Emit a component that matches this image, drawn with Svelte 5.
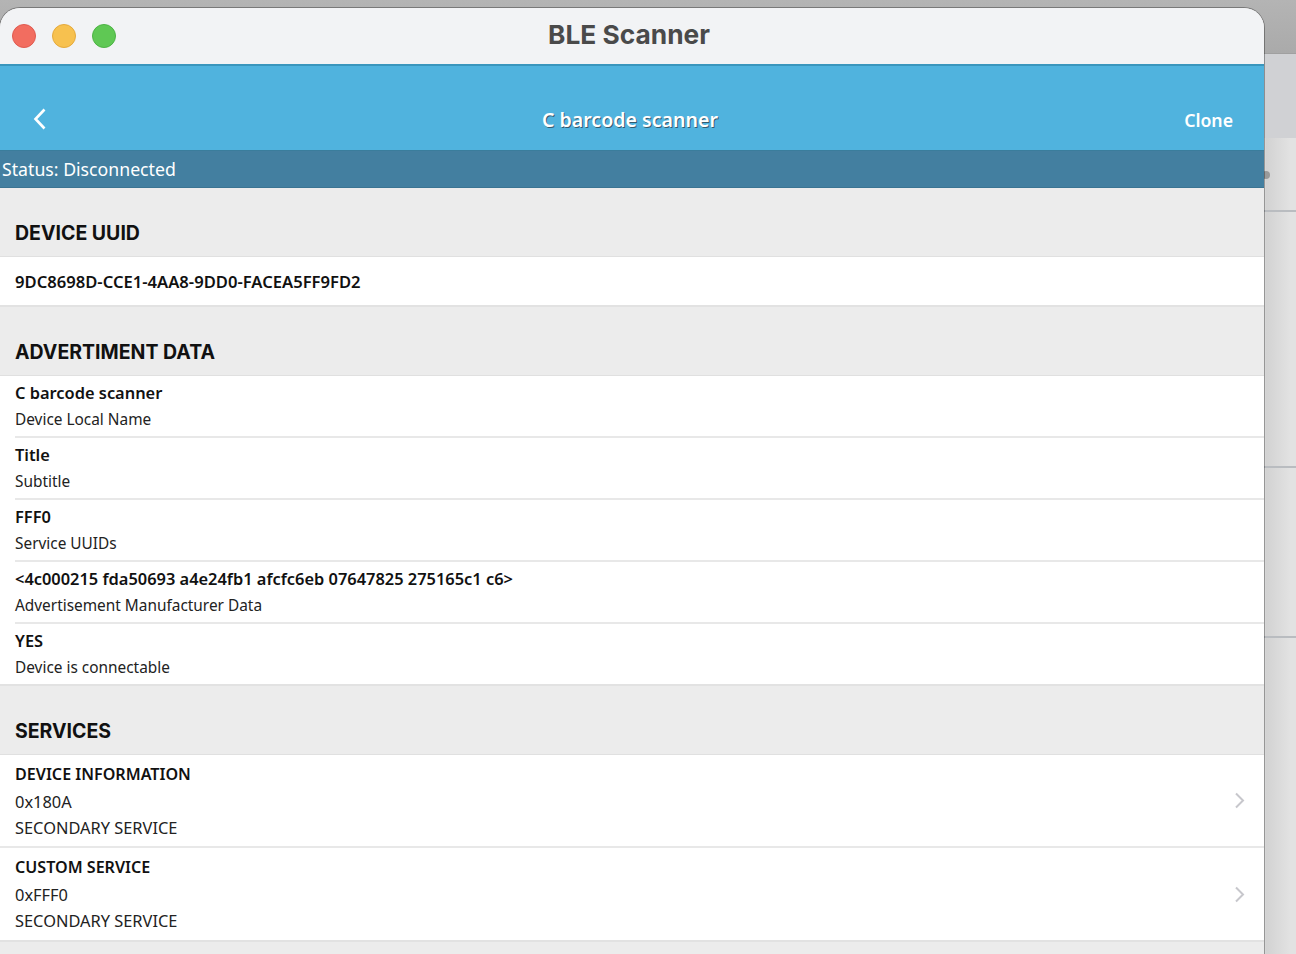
<script>
	const advertisement = [
		{ title: 'C barcode scanner', sub: 'Device Local Name' },
		{ title: 'Title', sub: 'Subtitle' },
		{ title: 'FFF0', sub: 'Service UUIDs' },
		{ title: '<4c000215 fda50693 a4e24fb1 afcfc6eb 07647825 275165c1 c6>', sub: 'Advertisement Manufacturer Data' },
		{ title: 'YES', sub: 'Device is connectable' }
	];

	const services = [
		{ name: 'DEVICE INFORMATION', uuid: '0x180A', kind: 'SECONDARY SERVICE' },
		{ name: 'CUSTOM SERVICE', uuid: '0xFFF0', kind: 'SECONDARY SERVICE' }
	];
</script>

<div class="desktop">
	<div class="backdrop">
		<div class="back-top"></div>
		<div class="back-band"></div>
		<div class="back-panel">
			<span class="back-dot"></span>
			<span class="back-line line-a"></span>
			<span class="back-line line-b"></span>
			<span class="back-line line-c"></span>
		</div>
	</div>

	<main class="window">
		<header class="titlebar">
			<div class="lights">
				<span class="light red"></span>
				<span class="light yellow"></span>
				<span class="light green"></span>
			</div>
			<h1>BLE Scanner</h1>
		</header>

		<nav class="navbar">
			<svg class="back" width="14" height="22" viewBox="0 0 14 22" aria-hidden="true">
				<path d="M11.5 1.5 L2.5 11 L11.5 20.5" fill="none" stroke="#fff" stroke-width="2.6" />
			</svg>
			<div class="nav-title">C barcode scanner</div>
			<div class="clone">Clone</div>
		</nav>

		<div class="status">Status: Disconnected</div>

		<section>
			<h2 class="head">DEVICE UUID</h2>
			<div class="uuid">9DC8698D-CCE1-4AA8-9DD0-FACEA5FF9FD2</div>
		</section>

		<section>
			<h2 class="head">ADVERTIMENT DATA</h2>
			<div class="list">
				{#each advertisement as row}
					<div class="row">
						<div class="row-title">{row.title}</div>
						<div class="row-sub">{row.sub}</div>
					</div>
				{/each}
			</div>
		</section>

		<section>
			<h2 class="head">SERVICES</h2>
			<div class="list">
				{#each services as service}
					<div class="service">
						<div>
							<div class="service-name">{service.name}</div>
							<div class="service-sub">{service.uuid}</div>
							<div class="service-sub">{service.kind}</div>
						</div>
						<svg width="11" height="17" viewBox="0 0 11 17" aria-hidden="true">
							<path d="M2 1.5 L9 8.5 L2 15.5" fill="none" stroke="#c7c7cc" stroke-width="2" />
						</svg>
					</div>
				{/each}
			</div>
		</section>
	</main>
</div>

<style>
	:global(body) {
		margin: 0;
		overflow: hidden;
	}

	.desktop {
		position: relative;
		height: 954px;
		overflow: hidden;
		padding-top: 8px;
		box-sizing: border-box;
		font-family: 'Noto Sans', 'Open Sans', sans-serif;
		color: #111;
	}

	.backdrop {
		position: absolute;
		inset: 0;
		background: #e2e2e2;
	}

	.back-top {
		height: 53px;
		background: linear-gradient(180deg, #b4b4b4, #aaaaaa);
		border-bottom: 1px solid #a0a0a0;
	}

	.back-band {
		height: 84px;
		background: #d0d1d4;
	}

	.back-panel {
		position: relative;
		height: 816px;
		background: linear-gradient(90deg, #e2e2e2 1264px, #d2d2d2 1266px, #e2e2e2 1290px);
	}

	.back-line {
		position: absolute;
		left: 0;
		right: 0;
		height: 2px;
		background: #b9bcc0;
	}

	.line-a {
		top: 72px;
	}

	.line-b {
		top: 328px;
	}

	.line-c {
		top: 498px;
	}

	.back-dot {
		position: absolute;
		left: 1262px;
		top: 33px;
		width: 8px;
		height: 8px;
		border-radius: 50%;
		background: #9a9a9a;
	}

	.window {
		position: relative;
		width: 1264px;
		height: 946px;
		background: #ececec;
		border-radius: 20px 20px 0 0;
		overflow: hidden;
		box-shadow: 0 0 0 1px rgba(0, 0, 0, 0.32);
	}

	.titlebar {
		position: relative;
		height: 56px;
		background: #f2f3f5;
		display: flex;
		align-items: center;
		justify-content: center;
	}

	.titlebar h1 {
		margin: 0;
		font-family: Inter, sans-serif;
		font-size: 26.3px;
		font-weight: 700;
		color: #4a4a4a;
		transform: translate(-3px, -2px);
	}

	.lights {
		position: absolute;
		left: 12px;
		top: 16px;
		display: flex;
		gap: 16px;
	}

	.light {
		width: 24px;
		height: 24px;
		border-radius: 50%;
		box-sizing: border-box;
		border: 1px solid;
	}

	.red {
		background: #f26d60;
		border-color: #df5a50;
	}

	.yellow {
		background: #f7c14f;
		border-color: #e4a93c;
	}

	.green {
		background: #5fc854;
		border-color: #4db345;
	}

	.navbar {
		position: relative;
		height: 87px;
		box-sizing: border-box;
		background: #50b3de;
		border-top: 2px solid #3a96bd;
		border-bottom: 1px solid #3a7d9c;
		display: flex;
		align-items: center;
		justify-content: space-between;
		padding: 23px 31px 0 33px;
		color: #fff;
	}

	.back {
		transform: translateY(-1px);
	}

	.nav-title {
		position: absolute;
		left: 0;
		right: 4px;
		top: 41px;
		text-align: center;
		font-size: 19.6px;
		font-weight: 600;
		line-height: 26px;
		text-shadow: 1px 1px 0 rgba(40, 50, 60, 0.7);
	}

	.clone {
		font-size: 17.7px;
		font-weight: 600;
		line-height: 24px;
	}

	.status {
		height: 37px;
		box-sizing: border-box;
		background: #437fa0;
		border-bottom: 1px solid #3b7492;
		color: #fff;
		font-size: 17.7px;
		line-height: 36px;
		padding-left: 2px;
	}

	.head {
		margin: 0;
		height: 69px;
		box-sizing: border-box;
		padding: 0 15px 11px;
		display: flex;
		align-items: flex-end;
		font-family: Inter, sans-serif;
		font-size: 19.5px;
		font-weight: 700;
		line-height: 24px;
		color: #111;
		background: #ececec;
		border-bottom: 1px solid #e0e0e0;
	}

	.uuid {
		height: 50px;
		box-sizing: border-box;
		background: #fff;
		border-bottom: 2px solid #e2e2e2;
		padding: 0 15px;
		font-size: 16.6px;
		font-weight: 600;
		line-height: 50px;
	}

	.list {
		background: #fff;
		border-bottom: 2px solid #e2e2e2;
	}

	.row {
		height: 62px;
		box-sizing: border-box;
		margin-left: 15px;
		padding-top: 4px;
		border-bottom: 2px solid #e8e8e8;
	}

	.row:last-child {
		border-bottom: none;
		height: 60px;
	}

	.row-title {
		font-size: 16.4px;
		font-weight: 600;
		line-height: 26px;
	}

	.row-sub {
		font-size: 15.4px;
		line-height: 27px;
		color: #222;
	}

	.service {
		height: 93px;
		box-sizing: border-box;
		display: flex;
		align-items: center;
		justify-content: space-between;
		padding: 0 19px 0 15px;
		box-shadow: inset 0 -2px 0 #e8e8e8;
	}

	.service:first-child {
		padding-bottom: 2px;
	}

	.service:last-child {
		box-shadow: none;
		height: 92px;
	}

	.service-name {
		font-size: 16.1px;
		font-weight: 600;
		line-height: 26px;
		margin-bottom: 2px;
	}

	.service-sub {
		font-size: 16.4px;
		line-height: 26px;
		color: #222;
	}
</style>
